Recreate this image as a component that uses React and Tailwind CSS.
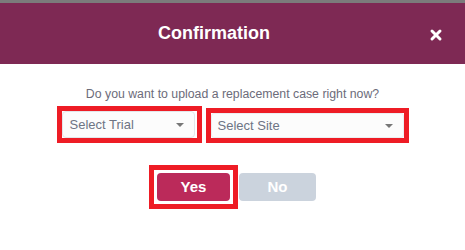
import { X } from 'lucide-react';

function Caret() {
    return <span className="w-0 h-0 border-l-[4px] border-r-[4px] border-t-[4px] border-l-transparent border-r-transparent border-t-[#777]" />;
}

export default function App() {
    return (
        <div className="w-[465px] h-[250px] bg-white overflow-hidden" style={{ fontFamily: '"Liberation Sans", Arial, sans-serif' }}>
            <div className="h-[3px] bg-[#7b7b7b]" />
            {/* Header */}
            <div className="relative h-[61px] bg-[#7e2954] flex items-center justify-center pr-[37px]">
                <h3 className="text-white font-bold text-[18px]">Confirmation</h3>
                <X size={16} strokeWidth={4.5} className="absolute right-[21px] top-[24px] text-white" />
            </div>

            {/* Body */}
            <p className="mt-[22px] text-center text-[12.3px] leading-4 text-[#6c6c7a]">
                Do you want to upload a replacement case right now?
            </p>
            <div className="mt-[4px] flex items-end justify-center gap-[4px]">
                <div className="w-[145px] h-[37px] border-[5px] border-[#ee1c25] pr-[2px]">
                    <div className="h-full flex items-center justify-between pl-[7px] pr-[10px] border border-[#e3e6ea] rounded-[4px] bg-[#fcfcfc] text-[13px] text-[#6e7484]">
                        <span>Select Trial</span>
                        <Caret />
                    </div>
                </div>
                <div className="w-[203px] h-[35px] border-[5px] border-[#ee1c25]">
                    <div className="h-full flex items-center justify-between pl-[6px] pr-[10px] border border-[#eceef1] rounded-[3px] bg-[#fcfcfc] text-[13px] text-[#6e7484]">
                        <span>Select Site</span>
                        <Caret />
                    </div>
                </div>
            </div>

            {/* Footer */}
            <div className="mt-[22px] flex items-center justify-center">
                <div className="w-[89px] h-[44px] border-[5px] border-[#ee1c25] flex items-center justify-center bg-white">
                    <button className="w-[73px] h-[28px] rounded-[4px] bg-[#bb2a5a] text-white font-bold text-[15px]">Yes</button>
                </div>
                <button className="ml-[1px] w-[77px] h-[28px] rounded-[4px] bg-[#cbd3dd] text-white font-bold text-[15px]">No</button>
            </div>
        </div>
    );
}
